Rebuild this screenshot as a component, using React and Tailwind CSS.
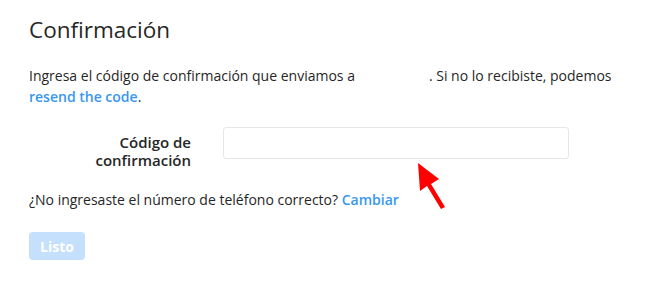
export default function App() {
  return (
    <div className="relative w-[650px] h-[283px] bg-white text-[#262626] overflow-hidden" style={{ fontFamily: '"Open Sans", "Noto Sans", sans-serif' }}>
      <div className="pl-[29px] pt-[14px] flex flex-col">
        <h1 className="text-[22.5px] leading-[32px] font-normal">Confirmación</h1>
        <p className="mt-[19px] text-[14px] leading-[21px]">
          Ingresa el código de confirmación que enviamos a
          <span className="inline-block w-[74px]"></span>
          . Si no lo recibiste, podemos
          <br />
          <span className="text-[#3897f0] font-semibold">resend the code</span>.
        </p>
        <div className="mt-[20px] flex items-start">
          <label className="mt-[6px] w-[162px] text-right text-[15px] leading-[18px] font-semibold flex flex-col">
            <span>Código de</span>
            <span>confirmación</span>
          </label>
          <div className="ml-[32px]">
            <input className="w-[346px] h-[32px] border border-[#e6e6e6] rounded-[3px] outline-none bg-white" />
          </div>
        </div>
        <p className="mt-[21px] text-[14px] leading-[20px]">
          ¿No ingresaste el número de teléfono correcto? <span className="text-[#3897f0] font-semibold">Cambiar</span>
        </p>
        <div className="mt-[22px]">
          <button className="w-[56px] h-[28px] rounded-[4px] bg-[#c4e0fc] text-white text-[14px] font-bold">Listo</button>
        </div>
      </div>
      <svg className="absolute left-[405px] top-[156px]" width="50" height="60" viewBox="0 0 50 60">
        <polygon points="13,7 34,23 26,28 40,51 36,53 22,30 15,35" fill="#ff0000" />
      </svg>
    </div>
  );
}
